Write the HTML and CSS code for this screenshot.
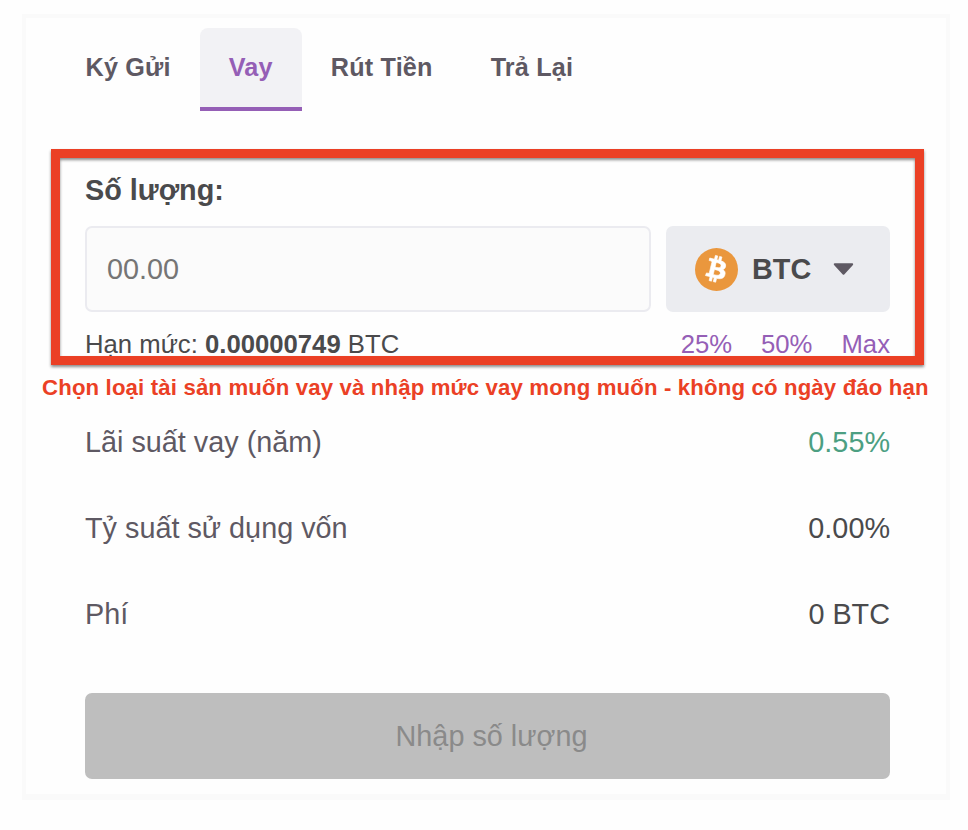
FILE: index.html
```html
<!DOCTYPE html>
<html lang="vi">
<head>
  <meta charset="UTF-8" />
  <meta name="viewport" content="width=device-width, initial-scale=1.0">
  <title>Vay BTC</title>
  <link rel="stylesheet" href="styles.css">
</head>
<body>
  <main class="card">
    <nav class="tabs">
      <a class="tab">Ký Gửi</a>
      <a class="tab active">Vay</a>
      <a class="tab">Rút Tiền</a>
      <a class="tab">Trả Lại</a>
    </nav>

    <section class="amount">
      <label class="amount-label" for="amount">Số lượng:</label>
      <div class="amount-row">
        <input id="amount" class="amount-input" type="text" placeholder="00.00">
        <button class="coin" type="button">
          <svg class="coin-icon" viewBox="0 0 32 32">
            <circle cx="16" cy="16" r="16" fill="#ea973d"/>
            <path transform="translate(-0.4 -0.5)" fill="#fff" stroke="#fff" stroke-width="0.5" d="M23.189 14.02c.314-2.096-1.283-3.223-3.465-3.975l.708-2.84-1.728-.43-.69 2.765c-.454-.114-.92-.22-1.385-.326l.695-2.783L15.596 6l-.708 2.839c-.376-.086-.746-.17-1.104-.26l.002-.009-2.384-.595-.46 1.846s1.283.294 1.256.312c.7.175.826.638.805 1.006l-.806 3.235c.048.012.11.03.18.057l-.183-.045-1.13 4.532c-.086.212-.303.531-.793.41.018.025-1.256-.313-1.256-.313l-.858 1.978 2.25.561c.418.105.828.215 1.231.318l-.715 2.872 1.727.43.708-2.84c.472.127.93.245 1.378.357l-.706 2.828 1.728.43.715-2.866c2.948.558 5.164.333 6.097-2.333.752-2.146-.037-3.385-1.588-4.192 1.13-.26 1.98-1.003 2.207-2.538zm-3.95 5.538c-.533 2.147-4.148.986-5.32.695l.95-3.805c1.172.293 4.929.872 4.37 3.11zm.535-5.569c-.487 1.953-3.495.96-4.47.717l.86-3.45c.975.243 4.118.696 3.61 2.733z"/>
          </svg>
          <span class="coin-name">BTC</span>
          <svg class="coin-caret" viewBox="0 0 21 12">
            <path d="M1.8 1.3H19.2L10.5 10.7Z" fill="#5e5963" stroke="#5e5963" stroke-width="2" stroke-linejoin="round"/>
          </svg>
        </button>
      </div>
      <div class="limit-row">
        <span class="limit">Hạn mức: <b>0.00000749</b> BTC</span>
        <div class="presets">
          <a>25%</a>
          <a>50%</a>
          <a>Max</a>
        </div>
      </div>
      <div class="highlight"></div>
    </section>

    <p class="note">Chọn loại tài sản muốn vay và nhập mức vay mong muốn - không có ngày đáo hạn</p>

    <dl class="details">
      <div class="detail">
        <dt>Lãi suất vay (năm)</dt>
        <dd class="rate">0.55%</dd>
      </div>
      <div class="detail">
        <dt>Tỷ suất sử dụng vốn</dt>
        <dd>0.00%</dd>
      </div>
      <div class="detail">
        <dt>Phí</dt>
        <dd>0 BTC</dd>
      </div>
    </dl>

    <button class="submit" type="button" disabled>Nhập số lượng</button>
  </main>
</body>
</html>
```
FILE: styles.css
```css
* {
  box-sizing: border-box;
}

body {
  margin: 0;
  padding: 14px 18px 0 22px;
  background-color: #fefefe;
  color: #4a4a4c;
  font-family: "Liberation Sans", Arial, Helvetica, sans-serif;
  font-size: 28.8px;
}

.card {
  height: 786px;
  padding: 10px 56px 0 59px;
  border: 4px solid #fafafa;
  border-bottom-width: 6px;
}

/* Tabs */
.tabs {
  display: flex;
  height: 83px;
  margin-left: -28.5px;
}

.tab {
  padding: 0 29px;
  border-bottom: 4px solid transparent;
  border-radius: 8px 8px 0 0;
  color: #5e5963;
  font-size: 25.2px;
  font-weight: bold;
  line-height: 79px;
  letter-spacing: 0.2px;
  white-space: nowrap;
}

.tab.active {
  background-color: #f2f2f5;
  border-bottom-color: #955fb6;
  color: #955fb6;
}

/* Amount */
.amount {
  position: relative;
  margin-top: 63px;
}

.amount-label {
  display: block;
  font-weight: bold;
  line-height: 32px;
}

.amount-row {
  display: flex;
  gap: 15px;
  height: 86px;
  margin-top: 20px;
}

.amount-input {
  flex: 1;
  min-width: 0;
  padding: 0 20px;
  border: 2px solid #ebebf0;
  border-radius: 7px;
  background-color: #fbfbfb;
  font: inherit;
}

.amount-input::placeholder {
  color: #757575;
}

.coin {
  display: flex;
  align-items: center;
  width: 224px;
  padding: 0 29px;
  border: none;
  border-radius: 7px;
  background-color: #ebecf0;
  color: #4a4a4c;
  font: inherit;
  font-weight: bold;
}

.coin-icon {
  width: 43px;
  height: 43px;
  margin-right: 14px;
}

.coin-caret {
  width: 21px;
  height: 12px;
  margin-left: auto;
  margin-right: 7px;
}

.limit-row {
  display: flex;
  justify-content: space-between;
  margin-top: 16px;
  font-size: 25.7px;
  line-height: 32px;
}

.presets {
  display: flex;
  gap: 29px;
  color: #955fb6;
}

/* Red frame drawn over the amount block */
.highlight {
  position: absolute;
  top: -25px;
  left: -34px;
  right: -34px;
  height: 216px;
  border: 9px solid #eb4025;
  filter: drop-shadow(0 2px 1.5px rgba(0, 0, 0, 0.45));
  pointer-events: none;
}

.note {
  margin: 16px -44px -1px -43px;
  color: #eb4025;
  font-size: 22.2px;
  font-weight: bold;
  line-height: 24px;
  letter-spacing: 0.15px;
  white-space: nowrap;
}

/* Details */
.details {
  margin: 0;
}

.detail {
  display: flex;
  justify-content: space-between;
  line-height: 86px;
}

.detail dt {
  color: #5e5963;
}

.detail dd {
  margin: 0;
}

.detail .rate {
  color: #4c9f82;
}

.submit {
  display: block;
  width: 100%;
  height: 86px;
  margin-top: 36px;
  padding: 0 0 0 8px;
  border: none;
  border-radius: 7px;
  background-color: #bebebe;
  color: #8a8a8a;
  font: inherit;
}
```
